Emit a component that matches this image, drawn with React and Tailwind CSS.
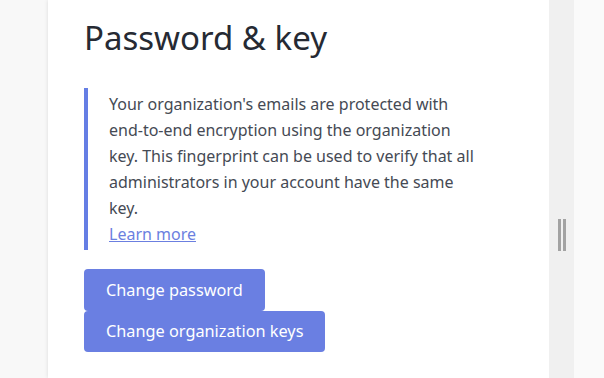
import React from 'react'

const App = () => {
    return (
        <main className="flex h-[378px] w-[604px] overflow-hidden bg-[#f8f8f8] font-['Noto_Sans',sans-serif]">
            <div className="w-[48px] shrink-0" />
            <section className="w-[501px] shrink-0 bg-white px-[36px] pt-[15px] shadow-[0_0_4px_rgba(0,0,0,0.12)]">
                <h1 className="text-[33px] leading-[46px] font-normal text-[#262a33]">Password &amp; key</h1>
                <div className="mt-[27px] w-[410px] border-l-4 border-[#657ee4] pl-[21px] pb-[3px] text-[16px] leading-[26px] text-[#454a54]">
                    <p className="pt-[3px]">
                        Your organization's emails are protected with<br />
                        end-to-end encryption using the organization<br />
                        key. This fingerprint can be used to verify that all<br />
                        administrators in your account have the same<br />
                        key.
                    </p>
                    <a href="#" className="text-[#6b7fe0] underline">Learn more</a>
                </div>
                <div className="mt-[19px] flex flex-col items-start">
                    <button className="h-[42px] rounded-[4px] bg-[#6a7fe2] px-[22px] text-[16.3px] text-white">Change password</button>
                    <button className="h-[41px] rounded-[4px] bg-[#6a7fe2] px-[22px] text-[16.3px] text-white">Change organization keys</button>
                </div>
            </section>
            <div className="flex w-[25px] shrink-0 items-start justify-center gap-[2px] bg-[#f0f0f0] pt-[219px]">
                <span className="h-[32px] w-[3px] bg-[#a3a3a3]" />
                <span className="h-[32px] w-[3px] bg-[#a3a3a3]" />
            </div>
            <div className="flex-1 bg-[#fafafa]" />
        </main>
    )
}

export default App
